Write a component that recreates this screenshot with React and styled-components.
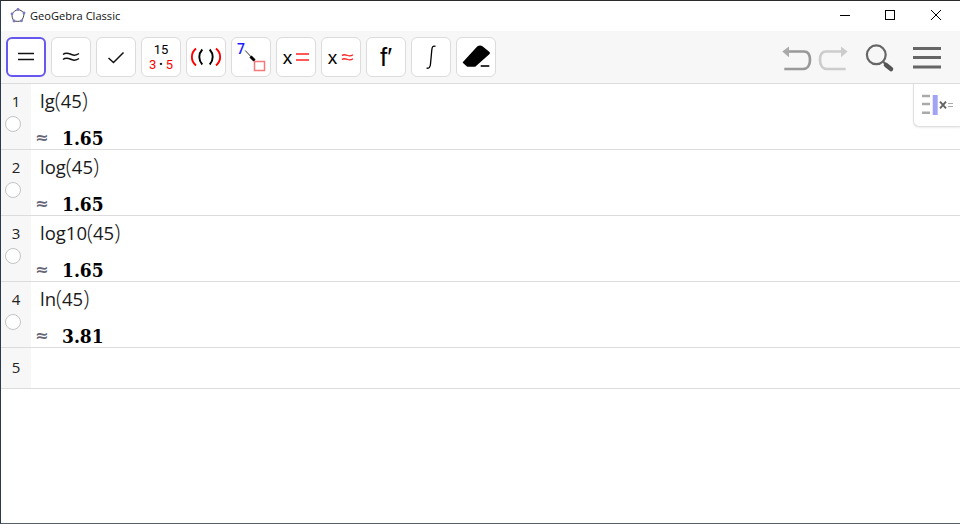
import React from 'react';
import styled, { createGlobalStyle } from 'styled-components';

const Global = createGlobalStyle`
  html, body { margin: 0; padding: 0; background: #fff; }
  #root { width: 960px; height: 524px; }
`;
const Win = styled.div`
  width: 960px; height: 524px; box-sizing: border-box; background: #fff; overflow: hidden;
  border-top: 1px solid #2b2b2b; border-left: 1px solid #2b3a4a; border-bottom: 1px solid #55606a;
  display: flex; flex-direction: column; font-family: "Open Sans", sans-serif; color: #000;
`;
const TitleBar = styled.div`
  height: 30px; box-sizing: border-box; flex: none; display: flex; align-items: center;
  padding: 0 1px 2px 9px;
`;
const AppName = styled.span`
  font: 11.1px "Open Sans", sans-serif; margin-left: 4px; flex: 1; color: #111;
`;
const WinBtn = styled.div`
  width: 46px; height: 28px; box-sizing: border-box; display: flex; align-items: center; justify-content: center;
  padding-left: ${p => p.$shift || 0}px;
`;
const Toolbar = styled.div`
  height: 53px; box-sizing: border-box; flex: none; background: #f7f7f7; border-bottom: 1px solid #dcdcdc;
  display: flex; align-items: flex-start; padding: 6px 19px 0 5px; gap: 5px;
`;
const Tool = styled.div`
  width: 40px; height: 40px; box-sizing: border-box; border-radius: 6px; background: #fff;
  border: ${p => (p.$active ? '2px solid #6557f0' : '1px solid #dcdcdc')};
  display: flex; align-items: center; justify-content: center; position: relative;
`;
const Spacer = styled.div` flex: 1; `;
const Right = styled.div` display: flex; align-items: center; height: 40px; `;
const Body = styled.div` flex: 1; position: relative; `;
const Row = styled.div`
  height: ${p => p.$h}px; box-sizing: border-box; border-bottom: 1px solid #dcdcdc; display: flex;
`;
const Gutter = styled.div`
  width: 30px; flex: none; background: #f7f7f7; display: flex; flex-direction: column; align-items: center;
`;
const Num = styled.div`
  font: 15px/15px "Open Sans", sans-serif; color: #222; margin-top: ${p => p.$mt}px;
`;
const Circle = styled.div`
  width: 14px; height: 14px; border-radius: 50%; border: 1px solid #c4c4c4; background: #fff; margin: 7px 0 0 -6px;
`;
const Cell = styled.div` flex: 1; padding-left: 9px; position: relative; `;
const Input = styled.div`
  font: 18.5px/22px "Open Sans", sans-serif; color: #1a1a1a; margin-top: 4px; height: 24px;
`;
const Paren = styled.span`
  font-size: 22px; font-weight: 300; line-height: 22px;
`;
const Output = styled.div`
  display: flex; align-items: center; height: 24px; margin-top: 14px; margin-left: -5px;
`;
const Approx = styled.span`
  width: 27px; font: bold 16px/1 "DejaVu Sans", sans-serif; color: #667;
`;
const Value = styled.span`
  font: bold 19px "DejaVu Serif Condensed", "DejaVu Serif", serif; color: #000;
`;
const SideTab = styled.div`
  position: absolute; right: 0; top: 0; width: 47px; height: 43px; box-sizing: border-box; background: #fff;
  border-left: 1px solid #e0e0e0; border-bottom: 1px solid #e0e0e0; border-bottom-left-radius: 6px;
  box-shadow: 0 1px 2px rgba(0,0,0,.08); display: flex; align-items: center; padding-left: 8px;
`;
const ToolLabel = styled.span`
  font: ${p => p.$w || 400} ${p => p.$size || 16}px/1 ${p => p.$font || 'Roboto, sans-serif'};
  color: ${p => p.$c || '#000'};
`;
const Stack = styled.div`
  display: flex; flex-direction: column; align-items: center; gap: 2px;
`;
const Factors = styled.div`
  display: flex; align-items: center; gap: 3px;
`;
const Corner7 = styled.span`
  position: absolute; left: 5px; top: 4px; font: 500 14px/1 Roboto, sans-serif; color: #1a1aff;
`;

const Line = ({ d, c = '#111', w = 1.6, s = 24 }) => (
  <svg width={s} height={s} viewBox="0 0 24 24" fill="none"><path d={d} stroke={c} strokeWidth={w} /></svg>
);
const wave = 'M4 9.500c3-2.500 6-1 8.500 0s5 1 7.500-1M4 14.500c3-2.500 6-1 8.500 0s5 1 7.500-1';
const smallWave = 'M1 5.500c2-1.600 3.500-.6 5.500 0s3.500.6 5.500-.8M1 9.500c2-1.600 3.500-.6 5.500 0s3.500.6 5.500-.8';
const sansX = '"Liberation Sans", sans-serif';

const rows = [
  { n: '1', fn: 'lg', arg: '45', v: '1.65' },
  { n: '2', fn: 'log', arg: '45', v: '1.65' },
  { n: '3', fn: 'log10', arg: '45', v: '1.65' },
  { n: '4', fn: 'ln', arg: '45', v: '3.81' },
];

export default function App() {
  return (
    <Win>
      <Global />
      <TitleBar>
        <svg width="16" height="15" viewBox="0 0 16 15" fill="none">
          <path d="M8 1.500C10 1.800 12 3 14 5 14 8 13 10.500 11.500 12.800 9 13.500 6.500 13.500 4 13 2.500 11 1.800 8.500 2 5.800 3.500 3.800 5.500 2.300 8 1.500Z" stroke="#444" strokeWidth="1" />
          {[[8, 1.5], [14, 5], [11.5, 12.8], [4, 13], [2, 5.8]].map(([x, y]) => (
            <circle key={x} cx={x} cy={y} r="1.400" fill="#7a78c8" />
          ))}
        </svg>
        <AppName>GeoGebra Classic</AppName>
        <WinBtn $shift={2}><svg width="10" height="10"><path d="M0 5.500H10" stroke="#000" /></svg></WinBtn>
        <WinBtn><svg width="10" height="10"><rect x=".5" y=".5" width="9" height="9" fill="none" stroke="#000" /></svg></WinBtn>
        <WinBtn><svg width="10" height="10"><path d="M0 0 10 10M10 0 0 10" stroke="#000" /></svg></WinBtn>
      </TitleBar>
      <Toolbar>
        <Tool $active><Line d="M4 8.500H20M4 14.500H20" w={1.7} /></Tool>
        <Tool><Line d={wave} w={1.5} /></Tool>
        <Tool><Line d="M4.500 13 9.500 17.500 19.500 7.500" w={1.5} /></Tool>
        <Tool>
          <Stack>
            <ToolLabel $size={13}>15</ToolLabel>
            <Factors>
              <ToolLabel $size={13} $c="#f00">3</ToolLabel>
              <ToolLabel $size={10}>•</ToolLabel>
              <ToolLabel $size={13} $c="#f00">5</ToolLabel>
            </Factors>
          </Stack>
        </Tool>
        <Tool>
          <svg width="36" height="24" viewBox="0 0 36 24" fill="none" strokeWidth="1.900">
            <path d="M8 3.500C2.500 8 2.500 16 8 20.500M28 3.500C33.500 8 33.500 16 28 20.500" stroke="#f00" />
            <path d="M14.300 4.500C10.300 9 10.300 15 14.300 19.500M21.700 4.500C25.700 9 25.700 15 21.700 19.500" stroke="#000" />
          </svg>
        </Tool>
        <Tool>
          <Corner7>7</Corner7>
          <svg width="37" height="37" viewBox="0 0 37 37" fill="none">
            <path d="M12.200 11.500 22.500 22.500" stroke="#333" />
            <path d="M17.500 17.500 21.500 21.500" stroke="#000" strokeWidth="3" />
            <rect x="21.500" y="22.500" width="10" height="9" stroke="#f87878" strokeWidth="1.500" />
          </svg>
        </Tool>
        <Tool>
          <ToolLabel $size={19} $font={sansX}>x</ToolLabel>
          <svg width="13" height="12" style={{ marginLeft: 4 }}><path d="M0 3H13M0 9H13" stroke="#f22" strokeWidth="1.500" /></svg>
        </Tool>
        <Tool>
          <ToolLabel $size={19} $font={sansX}>x</ToolLabel>
          <svg width="13" height="14" viewBox="0 0 13 14" style={{ marginLeft: 4 }} fill="none"><path d={smallWave} stroke="#f22" strokeWidth="1.300" /></svg>
        </Tool>
        <Tool><ToolLabel $size={26} $font={sansX}>f′</ToolLabel></Tool>
        <Tool><svg width="14" height="28" viewBox="0 0 14 28" fill="none"><path d="M11.500 3.400C9 2.300 8 4 7.800 7L6.500 21C6.200 24.500 5 25.800 2.500 25" stroke="#000" strokeWidth="1.300" /></svg></Tool>
        <Tool>
          <svg width="32" height="28" viewBox="0 0 32 28" fill="none">
            <path d="M3.500 19.500 17.500 4.200Q20 2.500 22 3.800L29 9.500Q29.500 10.500 28.500 11L15 23H7.500Z" fill="#000" stroke="#000" strokeWidth="1.500" strokeLinejoin="round" />
            <path d="M20.700 23H29.300" stroke="#000" strokeWidth="1.600" />
          </svg>
        </Tool>
        <Spacer />
        <Right>
          <svg width="30" height="28" viewBox="0 0 30 28" fill="none">
            <path d="M6 8.500H22C26 8.500 28 12 28 17 28 23 25 26 21 26H2.300" stroke="#999" strokeWidth="2.700" />
            <path d="M.3 8.500 7 3.500V14.200Z" fill="#aaa" />
          </svg>
          <svg width="30" height="28" viewBox="0 0 30 28" fill="none" style={{ marginLeft: 6 }}>
            <path d="M24 8.500H8C4 8.500 2 12 2 17 2 23 5 26 9 26H27.700" stroke="#ccc" strokeWidth="2.700" />
            <path d="M29.700 8.500 23 3.500V14.200Z" fill="#ccc" />
          </svg>
          <svg width="32" height="32" viewBox="0 0 32 32" fill="none" style={{ marginLeft: 17 }}>
            <circle cx="11.300" cy="13.800" r="9.400" stroke="#666" strokeWidth="2.200" />
            <path d="M18 20.500 21 23.500" stroke="#666" strokeWidth="2.200" />
            <path d="M21 24 26 28" stroke="#555" strokeWidth="4.500" strokeLinecap="round" />
          </svg>
          <svg width="28" height="26" viewBox="0 0 28 26" style={{ marginLeft: 16 }}>
            <path d="M0 4.500H28M0 13.500H28M0 23H28" stroke="#666" strokeWidth="3" />
          </svg>
        </Right>
      </Toolbar>
      <Body>
        {rows.map(r => (
          <Row key={r.n} $h={66}>
            <Gutter>
              <Num $mt={10}>{r.n}</Num>
              <Circle />
            </Gutter>
            <Cell>
              <Input>{r.fn}<Paren>(</Paren>{r.arg}<Paren>)</Paren></Input>
              <Output>
                <Approx>≈</Approx>
                <Value>{r.v}</Value>
              </Output>
            </Cell>
          </Row>
        ))}
        <Row $h={41}>
          <Gutter><Num $mt={12}>5</Num></Gutter>
          <Cell />
        </Row>
        <SideTab>
          <svg width="34" height="22" viewBox="0 0 34 22">
            <path d="M0 2H8M0 10H8M0 18.700H8" stroke="#aaa" strokeWidth="2.400" />
            <rect x="10.700" y="1" width="5" height="20" fill="#a3a3f5" />
            <path d="M18 7.700 24 14.300M24 7.700 18 14.300" stroke="#666" strokeWidth="2" />
            <path d="M26 9.500H31M26 12.500H31" stroke="#aaa" />
          </svg>
        </SideTab>
      </Body>
    </Win>
  );
}
